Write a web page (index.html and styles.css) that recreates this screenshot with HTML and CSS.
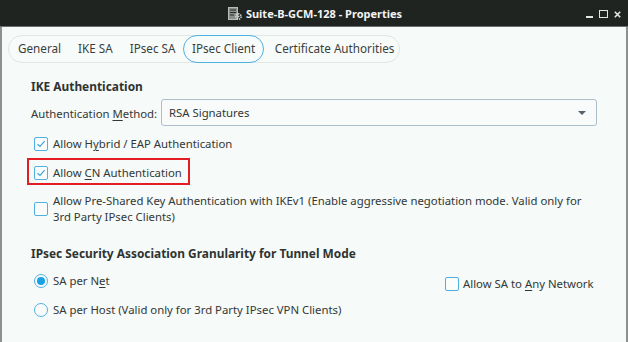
FILE: index.html
```html
<!DOCTYPE html>
<html>
<head>
<meta charset="utf-8">
<link rel="stylesheet" href="styles.css">
</head>
<body>
<div class="window">
  <div class="titlebar">
    <div class="title">
      <svg class="ticon" width="14" height="13" viewBox="0 0 14 13">
        <rect x="0.5" y="0.5" width="9" height="12" fill="#8a8d8b" stroke="#b9bcba" stroke-width="1"/>
        <rect x="2" y="2.5" width="6" height="1" fill="#2a2d2b"/>
        <rect x="2" y="5" width="6" height="1" fill="#2a2d2b"/>
        <rect x="2" y="7.5" width="4" height="1" fill="#2a2d2b"/>
        <circle cx="10.5" cy="9.5" r="2.6" fill="none" stroke="#d6d8d6" stroke-width="1.6" stroke-dasharray="1.4 0.9"/>
        <circle cx="10.5" cy="9.5" r="1" fill="#d6d8d6"/>
      </svg>
      <span>Suite-B-GCM-128 - Properties</span>
    </div>
    <div class="controls">
      <span class="ctl-min"></span>
      <span class="ctl-max"></span>
      <svg class="ctl-close" width="7" height="7" viewBox="0 0 7 7"><path d="M0.8 0.8 L6.2 6.2 M6.2 0.8 L0.8 6.2" stroke="#e4e6e4" stroke-width="1.6"/></svg>
    </div>
  </div>
  <div class="body">
    <div class="tabs">
      <div class="tab">General</div>
      <div class="tab">IKE SA</div>
      <div class="tab">IPsec SA</div>
      <div class="tab active">IPsec Client</div>
      <div class="tab t-cert">Certificate Authorities</div>
    </div>
    <div class="content">
      <div class="heading h1">IKE Authentication</div>
      <div class="method">
        <span class="mlabel">Authentication <u>M</u>ethod:</span>
        <div class="combo">
          <span>RSA Signatures</span>
          <span class="arrow"></span>
        </div>
      </div>
      <div class="row cb1">
        <span class="check on"><svg width="10" height="8" viewBox="0 0 10 8"><path d="M1.5 4.2 L4 6.5 L8.6 1.2" fill="none" stroke="#3aa6dd" stroke-width="1.2"/></svg></span>
        <span>Allow H<u>y</u>brid / EAP Authentication</span>
      </div>
      <div class="redbox">
        <div class="row">
          <span class="check on"><svg width="10" height="8" viewBox="0 0 10 8"><path d="M1.5 4.2 L4 6.5 L8.6 1.2" fill="none" stroke="#3aa6dd" stroke-width="1.2"/></svg></span>
          <span>Allow <u>C</u>N Authentication</span>
        </div>
      </div>
      <div class="row cb3">
        <span class="check"></span>
        <span class="multi">Allow Pre-Shared Key Authentication with IKEv1 (Enable aggressive negotiation mode. Valid only for 3rd Party IPsec Clients)</span>
      </div>
      <div class="heading h2">IPsec Security Association Granularity for Tunnel Mode</div>
      <div class="row r1">
        <span class="radio on"></span>
        <span class="rlabel">SA per N<u>e</u>t</span>
        <div class="anynet">
          <span class="check"></span>
          <span>Allow SA to <u>A</u>ny Network</span>
        </div>
      </div>
      <div class="row r2">
        <span class="radio"></span>
        <span>SA per Host (Valid only for 3rd Party IPsec VPN Clients)</span>
      </div>
    </div>
  </div>
</div>
</body>
</html>
```
FILE: styles.css
```css
html, body {
  margin: 0;
  padding: 0;
  width: 628px;
  height: 342px;
  overflow: hidden;
  background: #f6faf8;
  font-family: "Noto Sans", "DejaVu Sans", sans-serif;
  font-size: 11.35px;
  color: #333837;
}
u { text-decoration-thickness: 1px; text-underline-offset: 2px; }

.window {
  width: 628px;
  height: 342px;
  box-sizing: border-box;
  display: flex;
  flex-direction: column;
}

.titlebar {
  height: 26px;
  flex: none;
  background: #1f2420;
  border-bottom: 1px solid #6d716e;
  position: relative;
  display: flex;
  align-items: center;
  justify-content: center;
}
.title {
  display: flex;
  align-items: center;
  gap: 4px;
  color: #f2f3f2;
  font-weight: bold;
  font-size: 11px;
  margin-left: 2px;
}
.controls {
  position: absolute;
  right: 7px;
  top: 10px;
  display: flex;
  align-items: flex-end;
  gap: 6px;
}
.ctl-min {
  width: 7px;
  height: 0;
  border-bottom: 2px solid #e4e6e4;
}
.ctl-max {
  width: 7px;
  height: 6px;
  border: 1.5px solid #e4e6e4;
}
.ctl-close { margin-bottom: 0.5px; }

.body {
  flex: 1;
  border-left: 2px solid #8d918f;
  border-right: 2px solid #8d918f;
  display: flex;
  flex-direction: column;
}

.tabs {
  margin: 8px 0 0 6px;
  width: 392px;
  height: 28px;
  box-sizing: border-box;
  border: 1px solid #e1e7e4;
  border-radius: 14px;
  display: flex;
  align-items: center;
  background: #f7fbf9;
  font-size: 11.7px;
}
.tab {
  padding: 0 8px 0 9px;
  height: 28px;
  line-height: 26px;
  box-sizing: border-box;
  white-space: nowrap;
  color: #3a3f3d;
}
.tab.active {
  border: 1.5px solid #4fb0e2;
  border-radius: 14px;
  line-height: 25px;
  padding: 0 7.5px;
}
.t-cert { padding-left: 11px; padding-right: 0; }

.content {
  padding-left: 29px;
  display: flex;
  flex-direction: column;
}
.heading {
  font-weight: bold;
  font-size: 11.9px;
  line-height: 16px;
  height: 16px;
  color: #2f3432;
}
.h1 { margin-top: 15px; }
.method {
  margin-top: 5px;
  height: 27px;
  display: flex;
  align-items: center;
}
.mlabel { width: 130px; margin-top: 2px; white-space: nowrap; }
.combo {
  width: 436px;
  height: 27px;
  box-sizing: border-box;
  border: 1px solid #aebdca;
  border-radius: 3px;
  background: #f8fbfa;
  display: flex;
  align-items: center;
  justify-content: space-between;
  padding: 0 10px 0 7px;
}
.arrow {
  width: 0;
  height: 0;
  border-left: 4px solid transparent;
  border-right: 4px solid transparent;
  border-top: 4px solid #55626e;
  margin-top: 1px;
}

.row {
  display: flex;
  align-items: center;
  gap: 5px;
  margin-left: 3px;
  height: 20px;
  line-height: 16px;
  white-space: nowrap;
}
.cb1 { margin-top: 8px; }
.check {
  width: 14px;
  height: 14px;
  box-sizing: border-box;
  border: 1px solid #4fb0e2;
  border-radius: 2px;
  background: #fbfdfc;
  flex: none;
  display: flex;
  align-items: center;
  justify-content: center;
}
.redbox {
  margin-top: 4px;
  margin-left: -4px;
  width: 163px;
  height: 27px;
  box-sizing: border-box;
  border: 2px solid #e31d23;
  display: flex;
  align-items: flex-start;
  padding-top: 3px;
}
.redbox .row { margin-left: 5px; }
.cb3 {
  margin-top: 8px;
  height: 32px;
}
.multi { width: 545px; white-space: normal; }
.h2 { margin-top: 20px; }
.radio {
  width: 14px;
  height: 14px;
  box-sizing: border-box;
  border: 1.2px solid #4fb0e2;
  border-radius: 50%;
  background: #fbfdfc;
  flex: none;
  display: flex;
  align-items: center;
  justify-content: center;
}
.radio.on::after {
  content: "";
  width: 8px;
  height: 8px;
  border-radius: 50%;
  background: #1aa1e3;
}
.r1 { margin-top: 10px; }
.rlabel { width: 387px; }
.anynet {
  display: flex;
  align-items: center;
  gap: 4px;
  margin-top: 6px;
}
.r2 { margin-top: 9px; }
```
